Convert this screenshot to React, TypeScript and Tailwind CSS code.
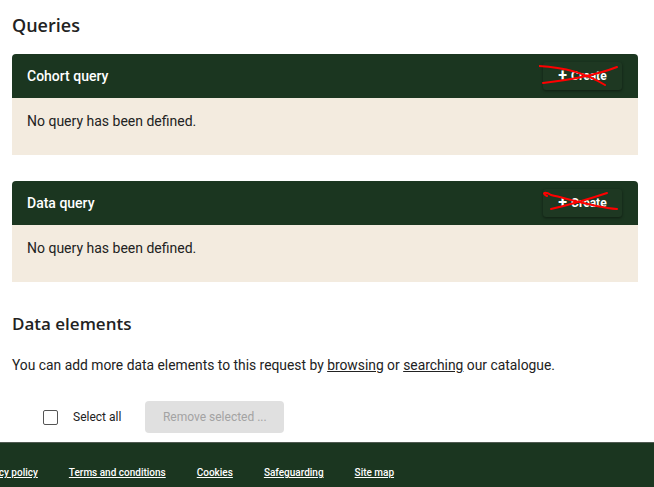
import React from "react";

function Scribble({ variant }: { variant: 1 | 2 }) {
  return (
    <svg
      className="pointer-events-none absolute -left-1 -top-1"
      width="90"
      height="36"
      viewBox="0 0 90 36"
      fill="none"
    >
      {variant === 1 ? (
        <>
          <path d="M0 8 C 20 9, 45 14, 66 27" stroke="#f00" strokeWidth="2" strokeLinecap="round" />
          <path d="M4 25 C 30 22, 55 18, 78 9" stroke="#f00" strokeWidth="2" strokeLinecap="round" />
        </>
      ) : (
        <>
          <path d="M8 11 C 2 8, 6 6, 12 10 C 30 14, 55 22, 78 24" stroke="#f00" strokeWidth="2" strokeLinecap="round" />
          <path d="M12 24 C 30 20, 50 14, 68 8" stroke="#f00" strokeWidth="2" strokeLinecap="round" />
        </>
      )}
    </svg>
  );
}

function QueryCard({ title, variant }: { title: string; variant: 1 | 2 }) {
  return (
    <div>
      <div className="flex h-[44px] items-center justify-between rounded-t-[4px] bg-[#1b3620] pl-[15px] pr-[16px]">
        <span className="text-[14px] font-medium text-white">{title}</span>
        <div className="relative">
          <button className="flex h-[28px] w-[79px] items-center justify-center gap-1 rounded-[3px] bg-[#1e3822] text-[12px] font-bold text-white shadow-[0_1px_3px_rgba(0,0,0,0.45)]">
            <span className="text-[16px] leading-none">+</span>
            <span>Create</span>
          </button>
          <Scribble variant={variant} />
        </div>
      </div>
      <div className="bg-[#f3ebdf] px-[15px] pb-[24px] pt-[13px] text-[14px] leading-[20px] text-[#222]">
        No query has been defined.
      </div>
    </div>
  );
}

export default function App() {
  return (
    <div className="flex h-[487px] w-[654px] flex-col overflow-hidden bg-white font-['Roboto',sans-serif]">
      <div className="pl-[12px] pr-[16px]">
        <h2 className="pt-[11px] font-['Open_Sans',sans-serif] text-[18px] font-semibold leading-[28px] text-[#222]">
          Queries
        </h2>
        <div className="mt-[15px] flex flex-col gap-[26px]">
          <QueryCard title="Cohort query" variant={1} />
          <QueryCard title="Data query" variant={2} />
        </div>
        <h2 className="mt-[29px] font-['Open_Sans',sans-serif] text-[17px] font-semibold leading-[26px] text-[#222]">
          Data elements
        </h2>
        <p className="mt-[18px] text-[13.85px] leading-[20px] text-[#222]">
          You can add more data elements to this request by{" "}
          <a className="underline">browsing</a> or <a className="underline">searching</a> our
          catalogue.
        </p>
        <div className="mt-[26px] flex items-center pl-[31px]">
          <span className="h-[15px] w-[15px] rounded-[2px] border border-[#555] bg-white" />
          <span className="ml-[15px] text-[12px] text-[#222]">Select all</span>
          <button className="ml-[24px] h-[32px] w-[139px] rounded-[4px] bg-[#e0e0e0] text-[12px] text-[#a3a3a3]">
            Remove selected ...
          </button>
        </div>
      </div>
      <footer className="mt-[9px] flex-1 border-t border-[#505a52] bg-[#1b3620]">
        <div className="ml-[-24px] mt-[22px] flex gap-[31px] text-[10px] font-medium text-white">
          <a className="underline">Privacy policy</a>
          <a className="underline">Terms and conditions</a>
          <a className="underline">Cookies</a>
          <a className="underline">Safeguarding</a>
          <a className="underline">Site map</a>
        </div>
      </footer>
    </div>
  );
}
